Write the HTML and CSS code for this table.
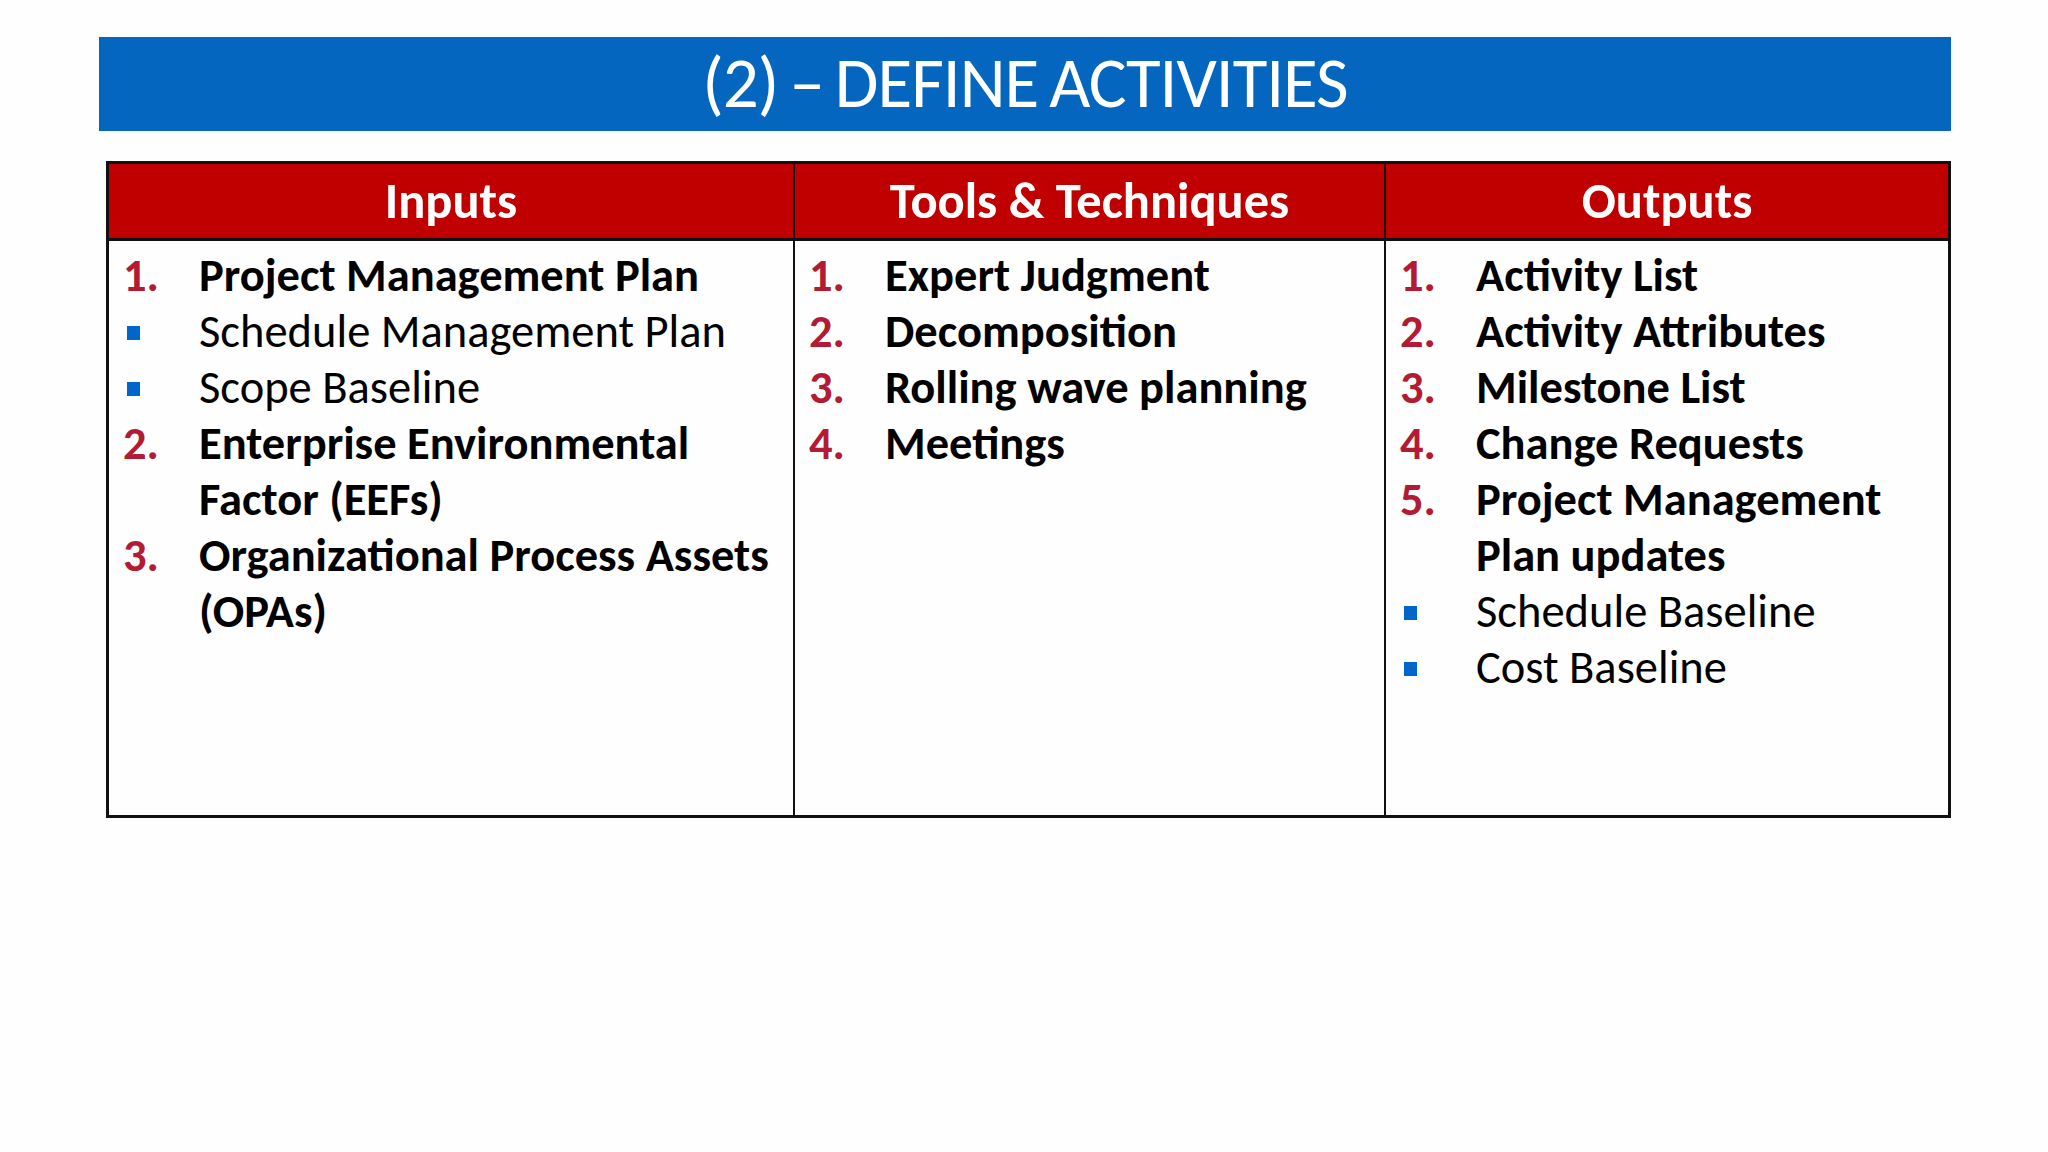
FILE: index.html
```html
<!DOCTYPE html>
<html lang="en">
<head>
<meta charset="utf-8">
<title>(2) – Define Activities</title>
<link rel="stylesheet" href="styles.css">
</head>
<body>
<main class="slide">
  <header class="banner"><h1 class="banner-title">(2) – DEFINE ACTIVITIES</h1></header>
  <section class="itto">
    <div class="col col-inputs">
      <div class="col-head">Inputs</div>
      <ul class="items">
        <li class="item num"><span class="mark">1.</span><span class="txt">Project Management Plan</span></li>
        <li class="item sub"><span class="mark"><i class="sq"></i></span><span class="txt">Schedule Management Plan</span></li>
        <li class="item sub"><span class="mark"><i class="sq"></i></span><span class="txt">Scope Baseline</span></li>
        <li class="item num"><span class="mark">2.</span><span class="txt">Enterprise Environmental<br>Factor (EEFs)</span></li>
        <li class="item num"><span class="mark">3.</span><span class="txt">Organizational Process Assets<br>(OPAs)</span></li>
      </ul>
    </div>
    <div class="col col-tools">
      <div class="col-head">Tools &amp; Techniques</div>
      <ul class="items">
        <li class="item num"><span class="mark">1.</span><span class="txt">Expert Judgment</span></li>
        <li class="item num"><span class="mark">2.</span><span class="txt">Decomposition</span></li>
        <li class="item num"><span class="mark">3.</span><span class="txt">Rolling wave planning</span></li>
        <li class="item num"><span class="mark">4.</span><span class="txt">Meetings</span></li>
      </ul>
    </div>
    <div class="col col-outputs">
      <div class="col-head">Outputs</div>
      <ul class="items">
        <li class="item num"><span class="mark">1.</span><span class="txt">Activity List</span></li>
        <li class="item num"><span class="mark">2.</span><span class="txt">Activity Attributes</span></li>
        <li class="item num"><span class="mark">3.</span><span class="txt">Milestone List</span></li>
        <li class="item num"><span class="mark">4.</span><span class="txt">Change Requests</span></li>
        <li class="item num"><span class="mark">5.</span><span class="txt">Project Management<br>Plan updates</span></li>
        <li class="item sub"><span class="mark"><i class="sq"></i></span><span class="txt">Schedule Baseline</span></li>
        <li class="item sub"><span class="mark"><i class="sq"></i></span><span class="txt">Cost Baseline</span></li>
      </ul>
    </div>
  </section>
</main>
</body>
</html>
```
FILE: styles.css
```css
html, body {
  margin: 0;
  padding: 0;
  background: #fefefe;
}
body {
  font-family: "Carlito", "Lato", "Liberation Sans", sans-serif;
  color: #000;
}
.slide {
  width: 2048px;
  height: 1152px;
  padding: 37px 97px 0 99px;
  box-sizing: border-box;
  display: flex;
  flex-direction: column;
}
.banner {
  height: 94px;
  background: #0566bf;
  display: flex;
  align-items: center;
  justify-content: center;
}
.banner-title {
  margin: 0;
  color: #fff;
  font-weight: 400;
  font-size: 71px;
  letter-spacing: -1px;
  word-spacing: -4px;
  line-height: 1;
  margin-top: -4px;
}
.itto {
  margin: 30px 0 0 7px;
  display: grid;
  grid-template-columns: 684px 591px 1fr;
  border: 3px solid #111;
  width: 1845px;
  height: 657px;
  box-sizing: border-box;
}
.col {
  display: flex;
  flex-direction: column;
  min-width: 0;
}
.col + .col {
  border-left: 2px solid #111;
}
.col-head {
  height: 74px;
  background: #c00000;
  color: #fff;
  font-weight: 700;
  font-size: 50.5px;
  display: flex;
  align-items: center;
  justify-content: center;
  border-bottom: 3px solid #111;
}
.items {
  list-style: none;
  margin: 0;
  padding: 6px 0 0 14px;
}
.item {
  display: flex;
  font-size: 46.5px;
  line-height: 56px;
  white-space: nowrap;
}
.mark {
  width: 76px;
  flex: none;
  color: #b31b34;
  font-weight: 700;
}
.num .txt {
  font-weight: 700;
}
.sub .txt {
  font-weight: 400;
}
.sq {
  display: inline-block;
  width: 13px;
  height: 14px;
  background: #0066cc;
  margin-left: 4px;
  vertical-align: 7px;
}
```
